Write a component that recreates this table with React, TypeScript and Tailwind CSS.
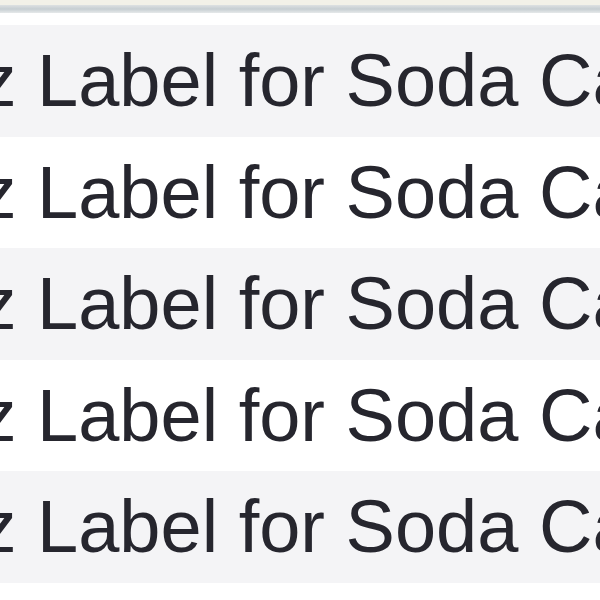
import React from "react";

const rows = [0, 1, 2, 3, 4];

export default function App() {
  return (
    <div className="w-[600px] h-[600px] overflow-hidden bg-white font-['Liberation_Sans',Arial,sans-serif]">
      <div className="h-[5px] bg-[#f2f1e8]" />
      <div className="h-[8px] bg-gradient-to-b from-[#dde1e2] via-[#c6ced2] to-[#e6e9ea]" />
      <div className="h-[12px] bg-white" />
      {rows.map((i) => (
        <div
          key={i}
          className={
            i % 2 === 0
              ? "h-[111.6px] bg-[#f4f4f6] overflow-hidden"
              : "h-[111.6px] bg-white overflow-hidden"
          }
        >
          <div className="ml-[-144px] whitespace-nowrap text-[74px] leading-[111.6px] text-[#26262e]">
            16oz Label for Soda Can
          </div>
        </div>
      ))}
    </div>
  );
}
